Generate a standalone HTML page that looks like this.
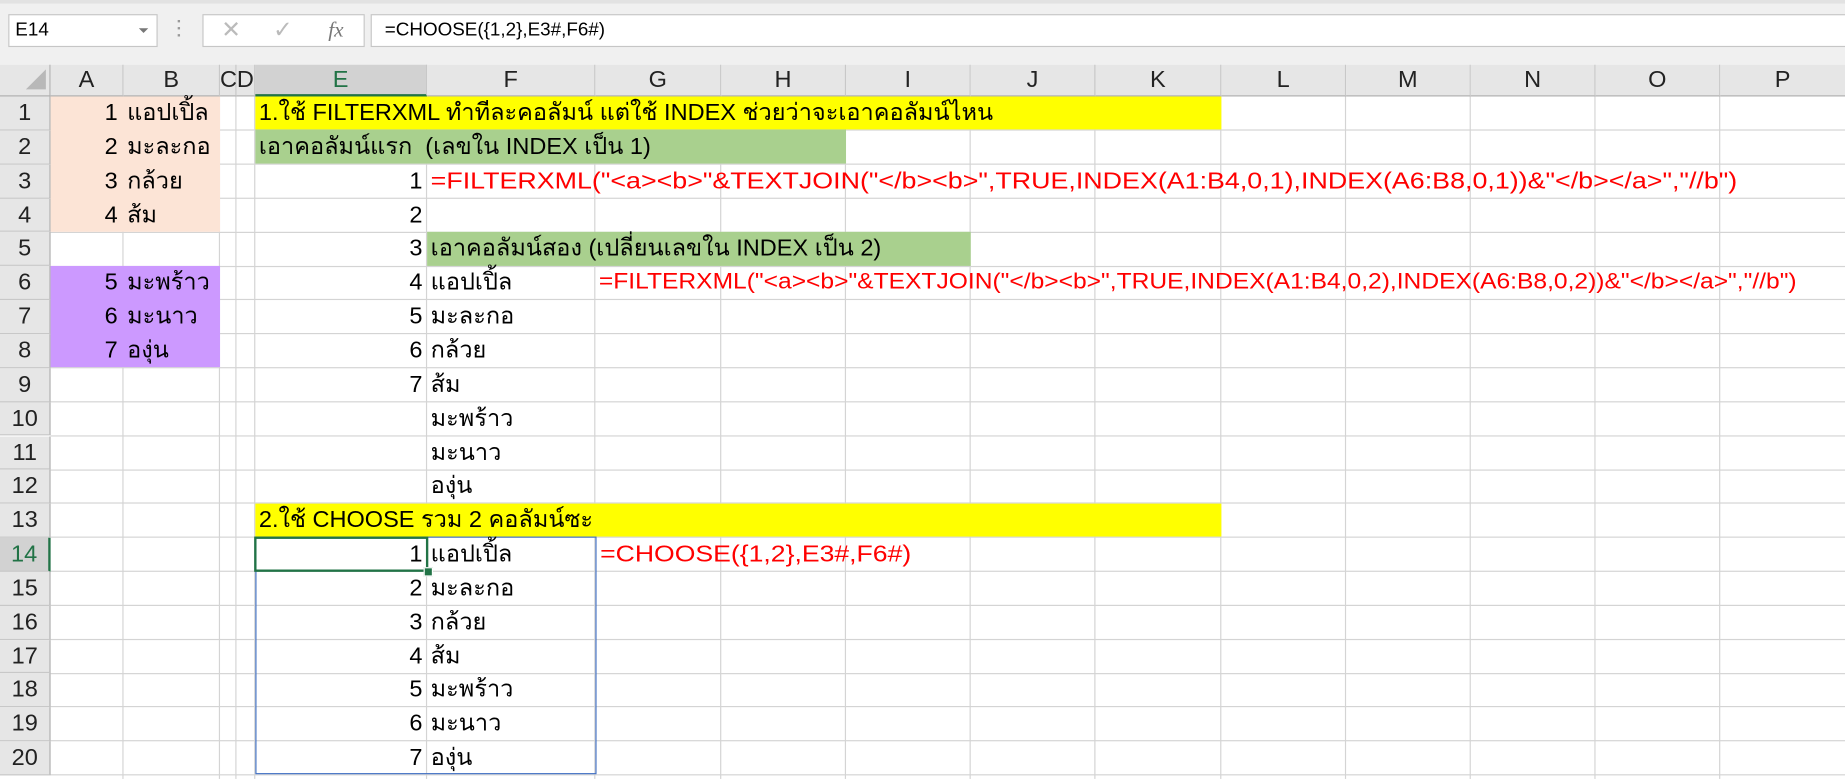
<!DOCTYPE html>
<html><head><meta charset="utf-8">
<style>
html,body{margin:0;padding:0;width:1845px;height:779px;overflow:hidden;background:#fff}
#w{position:absolute;left:0;top:0;width:1568px;height:662px;transform:scale(1.17666);transform-origin:0 0;font-family:"Liberation Sans","DejaVu Sans",sans-serif;}
.a{position:absolute}
.v{position:absolute;width:1px;background:#d4d4d4;top:82px;height:580px}
.h{position:absolute;height:1px;background:#d4d4d4;left:43px;width:1525px}
.t{position:absolute;font-size:20px;white-space:nowrap;line-height:28px;color:#000}
.r{color:#ff0000;transform-origin:0 50%}
.ch{position:absolute;top:55px;height:27px;background:#e6e6e6;border-right:1px solid #c8c8c8;border-bottom:1px solid #b0b0b0;box-sizing:border-box;font-size:20px;text-align:center;line-height:27px;color:#222}
.rh{position:absolute;left:0;width:43px;background:#e6e6e6;border-bottom:1px solid #c8c8c8;border-right:1px solid #b0b0b0;box-sizing:border-box;font-size:20px;text-align:center;color:#222}
</style></head><body><div id="w">
<div class="a" style="left:0;top:0;width:1568px;height:55px;background:#f0f0f0"></div>
<div class="a" style="left:0;top:0;width:1568px;height:3px;background:#e2e2e2"></div>
<div class="a" style="left:7px;top:12px;width:127px;height:28px;background:#fff;border:1px solid #c6c6c6;box-sizing:border-box"></div>
<div class="t" style="left:13px;top:12px;font-size:16px;">E14</div>
<div class="a" style="left:118px;top:24px;width:0;height:0;border-left:4px solid transparent;border-right:4px solid transparent;border-top:4px solid #777"></div>
<div class="a" style="left:151px;top:17px;width:2px;height:2px;background:#999;box-shadow:0 6px 0 #999,0 12px 0 #999"></div>
<div class="a" style="left:172px;top:12px;width:138px;height:28px;background:#fff;border:1px solid #c6c6c6;box-sizing:border-box"></div>
<div class="t" style="left:188px;top:12px;font-size:20px;color:#bbb">✕</div>
<div class="t" style="left:232px;top:12px;font-size:20px;color:#bbb">✓</div>
<div class="t" style="left:279px;top:11px;font-size:18px;color:#777;font-style:italic;font-family:'Liberation Serif',serif">fx</div>
<div class="a" style="left:315px;top:12px;width:1260px;height:28px;background:#fff;border:1px solid #c6c6c6;box-sizing:border-box"></div>
<div class="t" style="left:327px;top:12px;font-size:16px;">=CHOOSE({1,2},E3#,F6#)</div>
<div class="a" style="left:0;top:55px;width:43px;height:27px;background:#e6e6e6;border-right:1px solid #b0b0b0;border-bottom:1px solid #b0b0b0;box-sizing:border-box"></div>
<div class="a" style="left:22px;top:59px;width:0;height:0;border-left:17px solid transparent;border-bottom:17px solid #b8b8b8"></div>
<div class="ch" style="left:43px;width:62px">A</div>
<div class="ch" style="left:105px;width:82px">B</div>
<div class="ch" style="left:187px;width:14px;overflow:visible">C</div>
<div class="ch" style="left:201px;width:16px">D</div>
<div class="ch" style="left:217px;width:146px;background:#d2d2d2;color:#217346;border-bottom:2px solid #217346">E</div>
<div class="ch" style="left:363px;width:143px">F</div>
<div class="ch" style="left:506px;width:107px">G</div>
<div class="ch" style="left:613px;width:106px">H</div>
<div class="ch" style="left:719px;width:106px">I</div>
<div class="ch" style="left:825px;width:106px">J</div>
<div class="ch" style="left:931px;width:107px">K</div>
<div class="ch" style="left:1038px;width:106px">L</div>
<div class="ch" style="left:1144px;width:106px">M</div>
<div class="ch" style="left:1250px;width:106px">N</div>
<div class="ch" style="left:1356px;width:106px">O</div>
<div class="ch" style="left:1462px;width:106px;border-right:none">P</div>
<div class="rh" style="top:82px;height:28.85px;line-height:28.85px">1</div>
<div class="rh" style="top:110.85px;height:28.85px;line-height:28.85px">2</div>
<div class="rh" style="top:139.7px;height:28.85px;line-height:28.85px">3</div>
<div class="rh" style="top:168.55px;height:28.85px;line-height:28.85px">4</div>
<div class="rh" style="top:197.4px;height:28.85px;line-height:28.85px">5</div>
<div class="rh" style="top:226.25px;height:28.85px;line-height:28.85px">6</div>
<div class="rh" style="top:255.1px;height:28.85px;line-height:28.85px">7</div>
<div class="rh" style="top:283.95px;height:28.85px;line-height:28.85px">8</div>
<div class="rh" style="top:312.8px;height:28.85px;line-height:28.85px">9</div>
<div class="rh" style="top:341.65px;height:28.85px;line-height:28.85px">10</div>
<div class="rh" style="top:370.5px;height:28.85px;line-height:28.85px">11</div>
<div class="rh" style="top:399.35px;height:28.85px;line-height:28.85px">12</div>
<div class="rh" style="top:428.2px;height:28.85px;line-height:28.85px">13</div>
<div class="rh" style="top:457.05px;height:28.85px;line-height:28.85px;background:#d2d2d2;color:#217346;border-right:2px solid #217346">14</div>
<div class="rh" style="top:485.9px;height:28.85px;line-height:28.85px">15</div>
<div class="rh" style="top:514.75px;height:28.85px;line-height:28.85px">16</div>
<div class="rh" style="top:543.6px;height:28.85px;line-height:28.85px">17</div>
<div class="rh" style="top:572.45px;height:28.85px;line-height:28.85px">18</div>
<div class="rh" style="top:601.3px;height:28.85px;line-height:28.85px">19</div>
<div class="rh" style="top:630.15px;height:28.85px;line-height:28.85px">20</div>
<div class="v" style="left:104px"></div><div class="v" style="left:186px"></div><div class="v" style="left:200px"></div><div class="v" style="left:216px"></div><div class="v" style="left:362px"></div><div class="v" style="left:505px"></div><div class="v" style="left:612px"></div><div class="v" style="left:718px"></div><div class="v" style="left:824px"></div><div class="v" style="left:930px"></div><div class="v" style="left:1037px"></div><div class="v" style="left:1143px"></div><div class="v" style="left:1249px"></div><div class="v" style="left:1355px"></div><div class="v" style="left:1461px"></div>
<div class="h" style="top:110px"></div><div class="h" style="top:139px"></div><div class="h" style="top:168px"></div><div class="h" style="top:197px"></div><div class="h" style="top:226px"></div><div class="h" style="top:254px"></div><div class="h" style="top:283px"></div><div class="h" style="top:312px"></div><div class="h" style="top:341px"></div><div class="h" style="top:370px"></div><div class="h" style="top:399px"></div><div class="h" style="top:427px"></div><div class="h" style="top:456px"></div><div class="h" style="top:485px"></div><div class="h" style="top:514px"></div><div class="h" style="top:543px"></div><div class="h" style="top:572px"></div><div class="h" style="top:600px"></div><div class="h" style="top:629px"></div><div class="h" style="top:658px"></div>
<div class="a" style="left:43px;top:82px;width:144px;height:115px;background:#fce4d6"></div>
<div class="a" style="left:43px;top:226px;width:144px;height:86px;background:#cc99ff"></div>
<div class="a" style="left:217px;top:82px;width:821px;height:28px;background:#ffff00"></div>
<div class="a" style="left:217px;top:110px;width:502px;height:29px;background:#a9d08e"></div>
<div class="a" style="left:363px;top:197px;width:462px;height:29px;background:#a9d08e"></div>
<div class="a" style="left:217px;top:428px;width:821px;height:28px;background:#ffff00"></div>
<div class="a" style="left:217px;top:456px;width:290px;height:202px;border:1px solid #4472c4;box-sizing:border-box"></div>
<div class="a" style="left:216px;top:456px;width:148px;height:30px;border:2px solid #217346;box-sizing:border-box"></div>
<div class="a" style="left:360px;top:482px;width:6px;height:6px;background:#217346;border:1px solid #fff"></div>
<div class="t" style="left:43px;width:57px;text-align:right;top:82px">1</div><div class="t" style="left:108px;top:82px">แอปเปิ้ล</div>
<div class="t" style="left:43px;width:57px;text-align:right;top:110.85px">2</div><div class="t" style="left:108px;top:110.85px">มะละกอ</div>
<div class="t" style="left:43px;width:57px;text-align:right;top:139.7px">3</div><div class="t" style="left:108px;top:139.7px">กล้วย</div>
<div class="t" style="left:43px;width:57px;text-align:right;top:168.55px">4</div><div class="t" style="left:108px;top:168.55px">ส้ม</div>
<div class="t" style="left:43px;width:57px;text-align:right;top:226.25px">5</div><div class="t" style="left:108px;top:226.25px">มะพร้าว</div>
<div class="t" style="left:43px;width:57px;text-align:right;top:255.1px">6</div><div class="t" style="left:108px;top:255.1px">มะนาว</div>
<div class="t" style="left:43px;width:57px;text-align:right;top:283.95px">7</div><div class="t" style="left:108px;top:283.95px">องุ่น</div>
<div class="t" style="left:220px;top:82px">1.ใช้ FILTERXML ทำทีละคอลัมน์ แต่ใช้ INDEX ช่วยว่าจะเอาคอลัมน์ไหน</div>
<div class="t" style="left:220px;top:110.85px">เอาคอลัมน์แรก&nbsp; (เลขใน INDEX เป็น 1)</div>
<div class="t" style="left:217px;width:142px;text-align:right;top:139.7px">1</div>
<div class="t r" style="left:366px;top:139.7px;transform:scaleX(1.14)">=FILTERXML("&lt;a&gt;&lt;b&gt;"&amp;TEXTJOIN("&lt;/b&gt;&lt;b&gt;",TRUE,INDEX(A1:B4,0,1),INDEX(A6:B8,0,1))&amp;"&lt;/b&gt;&lt;/a&gt;","//b")</div>
<div class="t" style="left:217px;width:142px;text-align:right;top:168.55px">2</div>
<div class="t" style="left:217px;width:142px;text-align:right;top:197.4px">3</div>
<div class="t" style="left:366px;top:197.4px">เอาคอลัมน์สอง (เปลี่ยนเลขใน INDEX เป็น 2)</div>
<div class="t" style="left:217px;width:142px;text-align:right;top:226.25px">4</div><div class="t" style="left:366px;top:226.25px">แอปเปิ้ล</div>
<div class="t r" style="left:509px;top:226.25px;font-size:19px;transform:scaleX(1.10)">=FILTERXML("&lt;a&gt;&lt;b&gt;"&amp;TEXTJOIN("&lt;/b&gt;&lt;b&gt;",TRUE,INDEX(A1:B4,0,2),INDEX(A6:B8,0,2))&amp;"&lt;/b&gt;&lt;/a&gt;","//b")</div>
<div class="t" style="left:217px;width:142px;text-align:right;top:255.1px">5</div><div class="t" style="left:366px;top:255.1px">มะละกอ</div>
<div class="t" style="left:217px;width:142px;text-align:right;top:283.95px">6</div><div class="t" style="left:366px;top:283.95px">กล้วย</div>
<div class="t" style="left:217px;width:142px;text-align:right;top:312.8px">7</div><div class="t" style="left:366px;top:312.8px">ส้ม</div>
<div class="t" style="left:366px;top:341.65px">มะพร้าว</div>
<div class="t" style="left:366px;top:370.5px">มะนาว</div>
<div class="t" style="left:366px;top:399.35px">องุ่น</div>
<div class="t" style="left:220px;top:428.2px">2.ใช้ CHOOSE รวม 2 คอลัมน์ซะ</div>
<div class="t" style="left:217px;width:142px;text-align:right;top:457.05px">1</div><div class="t" style="left:366px;top:457.05px">แอปเปิ้ล</div>
<div class="t r" style="left:510px;top:457.05px;transform:scaleX(1.13)">=CHOOSE({1,2},E3#,F6#)</div>
<div class="t" style="left:217px;width:142px;text-align:right;top:485.9px">2</div><div class="t" style="left:366px;top:485.9px">มะละกอ</div>
<div class="t" style="left:217px;width:142px;text-align:right;top:514.75px">3</div><div class="t" style="left:366px;top:514.75px">กล้วย</div>
<div class="t" style="left:217px;width:142px;text-align:right;top:543.6px">4</div><div class="t" style="left:366px;top:543.6px">ส้ม</div>
<div class="t" style="left:217px;width:142px;text-align:right;top:572.45px">5</div><div class="t" style="left:366px;top:572.45px">มะพร้าว</div>
<div class="t" style="left:217px;width:142px;text-align:right;top:601.3px">6</div><div class="t" style="left:366px;top:601.3px">มะนาว</div>
<div class="t" style="left:217px;width:142px;text-align:right;top:630.15px">7</div><div class="t" style="left:366px;top:630.15px">องุ่น</div>
</div></body></html>
